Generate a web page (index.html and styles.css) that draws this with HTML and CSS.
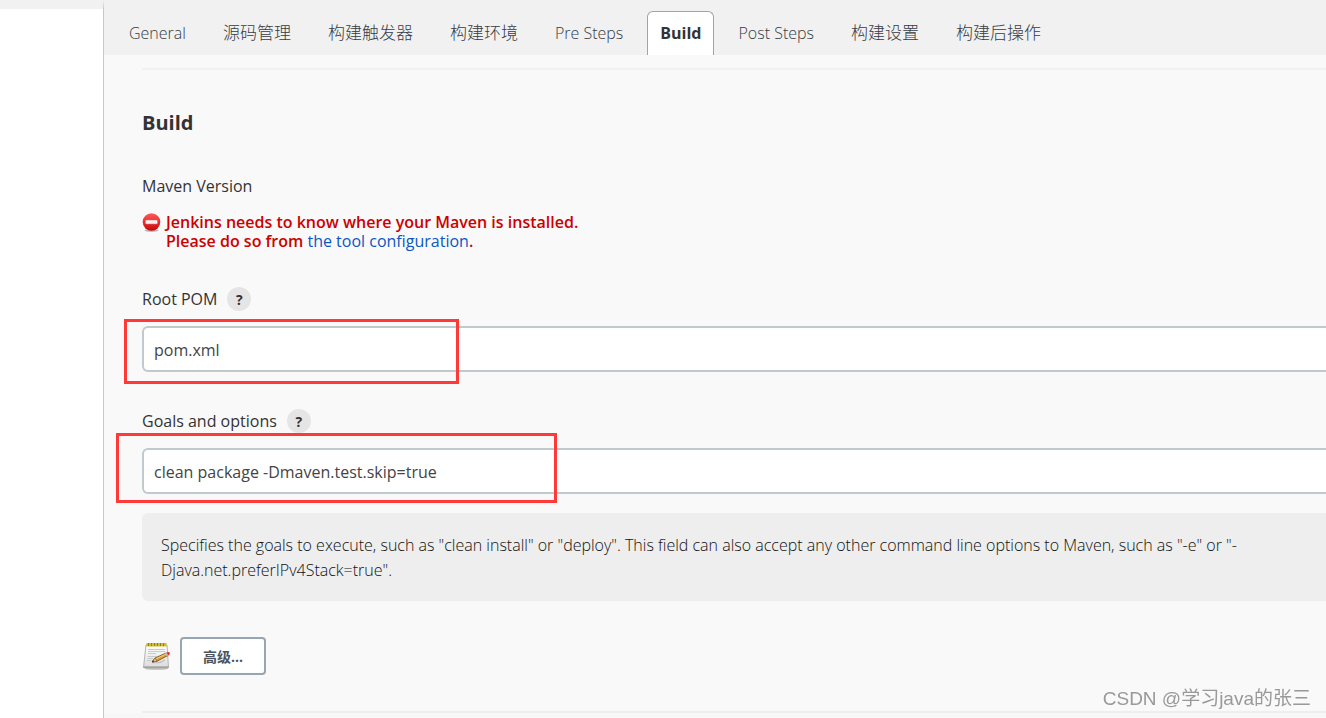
FILE: index.html
```html
<!DOCTYPE html>
<html lang="zh-CN">
<head>
    <meta charset="UTF-8">
    <meta name="viewport" content="width=device-width, initial-scale=1.0">
    <title>Build - Jenkins</title>
    <link rel="stylesheet" href="styles.css">
</head>
<body>
    <div class="page">
        <aside class="side-panel"></aside>

        <main class="main-panel">
            <nav class="tab-bar">
                <a class="tab" href="#general">General</a>
                <a class="tab zh" href="#scm">源码管理</a>
                <a class="tab zh" href="#triggers">构建触发器</a>
                <a class="tab zh" href="#environment">构建环境</a>
                <a class="tab" href="#pre-steps">Pre Steps</a>
                <a class="tab active" href="#build">Build</a>
                <a class="tab" href="#post-steps">Post Steps</a>
                <a class="tab zh" href="#settings">构建设置</a>
                <a class="tab zh" href="#post-build">构建后操作</a>
            </nav>

            <form class="config" id="build">
                <h2>Build</h2>

                <div class="field-label">Maven Version</div>
                <div class="error">
                    <svg class="error-icon" viewBox="0 0 20 20" aria-hidden="true">
                        <defs>
                            <linearGradient id="stop" x1="0" y1="0" x2="0" y2="1">
                                <stop offset="0" stop-color="#ff5a5a"/>
                                <stop offset="0.5" stop-color="#ea2f2f"/>
                                <stop offset="1" stop-color="#c40808"/>
                            </linearGradient>
                        </defs>
                        <ellipse cx="9.500" cy="17.500" rx="7" ry="1.4" fill="#000" opacity="0.25"/>
                        <circle cx="9.500" cy="9" r="8.800" fill="url(#stop)"/>
                        <rect x="3.500" y="7" width="12" height="4" rx="0.8" fill="#f4f0f0" stroke="#d96a6a" stroke-width="0.5"/>
                    </svg>
                    <div>
                        Jenkins needs to know where your Maven is installed.<br>
                        Please do so from <a href="#tools">the tool configuration</a>.
                    </div>
                </div>

                <div class="field">
                    <div class="field-label">
                        <label for="root-pom">Root POM</label>
                        <button class="help-button" type="button" aria-label="Help for Root POM">?</button>
                    </div>
                    <input class="text-input" id="root-pom" type="text" value="pom.xml">
                    <span class="mark mark-pom"></span>
                </div>

                <div class="field">
                    <div class="field-label">
                        <label for="goals">Goals and options</label>
                        <button class="help-button" type="button" aria-label="Help for Goals and options">?</button>
                    </div>
                    <input class="text-input" id="goals" type="text" value="clean package -Dmaven.test.skip=true">
                    <span class="mark mark-goals"></span>
                </div>

                <div class="help">
                    Specifies the goals to execute, such as "clean install" or "deploy". This field can also accept any other command line options to Maven, such as "-e" or "-Djava.net.preferIPv4Stack=true".
                </div>

                <div class="advanced">
                    <svg class="notepad-icon" viewBox="0 0 28 28" aria-hidden="true">
                        <defs>
                            <linearGradient id="paper" x1="0" y1="0" x2="0" y2="1">
                                <stop offset="0" stop-color="#ffffff"/>
                                <stop offset="1" stop-color="#dcdcdc"/>
                            </linearGradient>
                        </defs>
                        <ellipse cx="14.500" cy="26.4" rx="12" ry="1.4" fill="#000" opacity="0.25"/>
                        <path d="M4 3H25L26.500 25.500H1.500Z" fill="url(#paper)" stroke="#b5b5b5"/>
                        <path d="M1.500 25H26.500" stroke="#8f8f8f"/>
                        <path d="M4.500 1H24.500V4.500H4Z" fill="#d1bd2c"/>
                        <path d="M6.500 1V4M9.500 1V4M12.500 1V4M15.500 1V4M18.500 1V4M21.500 1V4" stroke="#8d821c"/>
                        <path d="M6 7.500H23M6 9.500H23M6 11.500H14M5.500 14.500H15M5.500 16.500H11M5 18.500H9" stroke="#c9c9c9"/>
                        <path d="M10 20.500H18L23 18" stroke="#000" stroke-width="1.5" opacity="0.15" fill="none"/>
                        <path d="M10 20L13 16L24.500 10.800L26 13.500L15 19.200Z" fill="#e09a35" stroke="#7a4a12" stroke-width="0.8"/>
                        <path d="M13.500 17L25 11.700" stroke="#f9cf7d"/>
                        <path d="M10 20L13 16L15 19.200Z" fill="#e8cda0" stroke="#6b4a25" stroke-width="0.6"/>
                        <path d="M10 20L11.200 18.300L12.200 19.600Z" fill="#222"/>
                        <path d="M23 11.300L24.700 10.500L26.300 13.300L24.700 14.200Z" fill="#b9bcc4"/>
                        <path d="M24.700 10.500Q27 9.300 27.700 10.800Q28.300 12.300 26.300 13.300Z" fill="#e02f2f"/>
                    </svg>
                    <button class="advanced-button" type="button">高级...</button>
                </div>
            </form>

            <div class="bottom-bar"></div>
        </main>
    </div>

    <div class="watermark">CSDN @学习java的张三</div>
</body>
</html>
```
FILE: styles.css
```css
:root {
    --bar: #f1f1f1;
    --background: #f9f9f9;
    --border: #bfcacd;
    --button-border: #98a6b1;
    --text: #333;
    --text-light: #4d545d;
    --error: #cc0000;
    --link: #0b56c4;
    --mark: #ff3838;
}

* {
    box-sizing: border-box;
}

body {
    margin: 0;
    background: #fff;
    color: var(--text);
    font-family: "Open Sans", "Noto Sans CJK SC", sans-serif;
    font-size: 16px;
    overflow: hidden;
}

.page {
    display: flex;
    min-height: 100vh;
}

.side-panel {
    width: 104px;
    flex-shrink: 0;
    border-top: 9px solid var(--bar);
    border-right: 1px solid var(--border);
}

.main-panel {
    flex: 1;
    min-width: 0;
    display: flex;
    flex-direction: column;
    background: var(--background);
}

.tab-bar {
    display: flex;
    gap: 11px;
    height: 55px;
    padding: 11px 12px 0;
    background: var(--bar);
}

.tab {
    padding: 0 12px;
    border: 1px solid transparent;
    border-bottom: none;
    border-radius: 6px 6px 0 0;
    color: #353c45;
    font-weight: 300;
    line-height: 42px;
    text-decoration: none;
    white-space: nowrap;
}

.tab.zh {
    font-size: 17px;
}

.tab.active {
    background: #fff;
    border-color: var(--button-border);
    color: var(--text);
    font-weight: 700;
}

.config {
    margin-top: 13px;
    margin-left: 38px;
    padding: 38px 0 36px;
    border-top: 2px solid var(--bar);
    border-bottom: 2px solid #eee;
}

h2 {
    margin: 0 0 36px;
    font-size: 20px;
    line-height: 30px;
}

.field-label {
    display: flex;
    align-items: center;
    gap: 10px;
    height: 24px;
    font-weight: 500;
}

.error {
    display: flex;
    gap: 4px;
    margin: 15px 0 36px;
    color: var(--error);
    font-weight: 600;
    line-height: 19px;
}

.error-icon {
    width: 20px;
    height: 20px;
}

.error a {
    color: var(--link);
    font-weight: 500;
    text-decoration: none;
}

.field {
    position: relative;
}

.field + .field {
    margin-top: 37px;
}

.help-button {
    width: 24px;
    height: 24px;
    padding: 0;
    border: none;
    border-radius: 50%;
    background: #e5e5e5;
    color: var(--text);
    font: 700 14px "Open Sans", sans-serif;
}

.text-input {
    display: block;
    width: 100%;
    height: 46px;
    margin-top: 15px;
    padding: 2px 10px 0;
    border: 2px solid var(--border);
    border-right: none;
    border-radius: 6px 0 0 6px;
    background: #fff;
    color: #444;
    font: inherit;
}

/* red boxes over the two fields */
.mark {
    position: absolute;
    border: 3px solid var(--mark);
    pointer-events: none;
}

.mark-pom {
    top: 32px;
    left: -18px;
    width: 335px;
    height: 65px;
}

.mark-goals {
    top: 24px;
    left: -26px;
    width: 441px;
    height: 70px;
}

.help {
    margin-top: 19px;
    padding: 20px 19px 18px;
    border-radius: 6px 0 0 6px;
    background: #eee;
    color: #111;
    font-weight: 300;
    line-height: 25px;
}

.advanced {
    display: flex;
    align-items: center;
    gap: 10px;
    margin-top: 36px;
}

.notepad-icon {
    width: 28px;
    height: 28px;
}

.advanced-button {
    width: 86px;
    height: 38px;
    border: 2px solid var(--button-border);
    border-radius: 4px;
    background: #fff;
    color: var(--text-light);
    font: 700 14px "Open Sans", "Noto Sans CJK SC", sans-serif;
}

.bottom-bar {
    flex: 1;
    background: #f7f7f7;
}

.watermark {
    position: fixed;
    right: 15px;
    bottom: 5px;
    color: #999;
    font-family: "Liberation Sans", "Noto Sans CJK SC", sans-serif;
    font-size: 19px;
    line-height: 28px;
}
```
